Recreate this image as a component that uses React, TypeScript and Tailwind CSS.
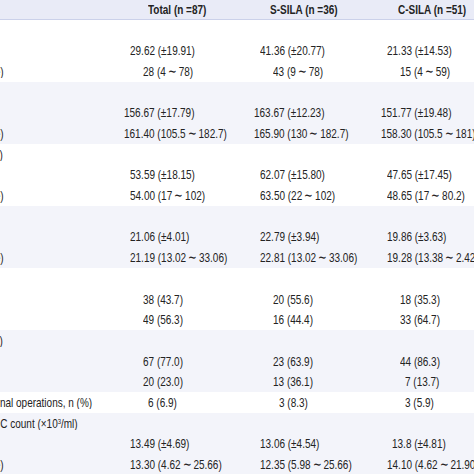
import React from 'react';

type Cell = { text: string; pad: string };

type Row = {
  label?: React.ReactNode;
  labelPad?: string;
  cells?: [Cell, Cell, Cell];
  shaded: boolean;
};

// range separator, tight like the source typesetting
const T = '\u2009∼\u2009';

// left offsets inside each value column
const d = (text: string): Cell => ({ text, pad: 'pl-[10px]' });
const w = (text: string): Cell => ({ text, pad: 'pl-[4px]' });
const n = (text: string): Cell => ({ text, pad: 'pl-[23px]' });
const s = (text: string): Cell => ({ text, pad: 'pl-[28px]' });

const group = (
  label: string,
  labelPad: string,
  shaded: boolean,
  a: [Cell, Cell, Cell],
  b: [Cell, Cell, Cell]
): Row[] => [
  { label, labelPad, shaded },
  { label: 'Mean (±SD)', labelPad: 'pr-[150px]', shaded, cells: a },
  { label: 'Median (range)', labelPad: 'pr-[116px]', shaded, cells: b },
];

const rows: Row[] = [
  ...group('Age, years', 'pr-[150px]', false,
    [d('29.62 (±19.91)'), d('41.36 (±20.77)'), d('21.33 (±14.53)')],
    [n(`28 (4${T}78)`), n(`43 (9${T}78)`), n(`15 (4${T}59)`)]),
  ...group('Height, cm', 'pr-[150px]', true,
    [w('156.67 (±17.79)'), w('163.67 (±12.23)'), w('151.77 (±19.48)')],
    [w(`161.40 (105.5${T}182.7)`), w(`165.90 (130${T}182.7)`), w(`158.30 (105.5${T}181)`)]),
  ...group('Weight, kg (range)', 'pr-[117px]', false,
    [d('53.59 (±18.15)'), d('62.07 (±15.80)'), d('47.65 (±17.45)')],
    [d(`54.00 (17${T}102)`), d(`63.50 (22${T}102)`), d(`48.65 (17${T}80.2)`)]),
  ...group('BMI, kg/m²', 'pr-[150px]', true,
    [d('21.06 (±4.01)'), d('22.79 (±3.94)'), d('19.86 (±3.63)')],
    [d(`21.19 (13.02${T}33.06)`), d(`22.81 (13.02${T}33.06)`), d(`19.28 (13.38${T}2.42)`)]),
  { label: 'Sex, n (%)', labelPad: 'pr-[150px]', shaded: false },
  { label: 'Male', labelPad: 'pr-[150px]', shaded: false, cells: [n('38 (43.7)'), n('20 (55.6)'), n('18 (35.3)')] },
  { label: 'Female', labelPad: 'pr-[150px]', shaded: false, cells: [n('49 (56.3)'), n('16 (44.4)'), n('33 (64.7)')] },
  { label: 'ASA score, n (%)', labelPad: 'pr-[117px]', shaded: true },
  { label: 'I', labelPad: 'pr-[150px]', shaded: true, cells: [n('67 (77.0)'), n('23 (63.9)'), n('44 (86.3)')] },
  { label: 'II', labelPad: 'pr-[150px]', shaded: true, cells: [n('20 (23.0)'), n('13 (36.1)'), s('7 (13.7)')] },
  {
    label: 'Previous abdominal operations, n (%)',
    labelPad: 'pr-[28px]',
    shaded: false,
    cells: [s('6 (6.9)'), { text: '3 (8.3)', pad: 'pl-[29px]' }, s('3 (5.9)')],
  },
  {
    label: (
      <>
        Preoperative WBC count (×10<sup className="text-[8px]">3</sup>/ml)
      </>
    ),
    labelPad: 'pr-[42px]',
    shaded: true,
  },
  { label: 'Mean (±SD)', labelPad: 'pr-[150px]', shaded: true, cells: [d('13.49 (±4.69)'), d('13.06 (±4.54)'), { text: '13.8 (±4.81)', pad: 'pl-[15px]' }] },
  { label: 'Median (range)', labelPad: 'pr-[116px]', shaded: true, cells: [d(`13.30 (4.62${T}25.66)`), d(`12.35 (5.98${T}25.66)`), d(`14.10 (4.62${T}21.90)`)] },
];

// the source table is set in a condensed face; squeeze Arial-metric text to match
function Narrow({ children, right }: { children: React.ReactNode; right?: boolean }) {
  return (
    <span className={`inline-block scale-x-[0.74] ${right ? 'origin-right' : 'origin-left'}`}>
      {children}
    </span>
  );
}

const cols = 'grid grid-cols-[320px_130px_127px_140px]';

export default function App() {
  return (
    <div
      className="w-[474px] h-[474px] overflow-hidden bg-white text-[13.5px] text-[#232323] leading-none"
      style={{ fontFamily: '"Liberation Sans", Arial, sans-serif' }}
    >
      {/* the crop starts 200px into the label column */}
      <div className="-ml-[200px] w-[717px]">
        <div className={`${cols} h-[20px] items-center bg-[#e9ebf7] border-b border-[#cbd1ea] font-bold whitespace-nowrap`}>
          <div />
          <div className="pl-[28px]">
            <Narrow>Total (n =87)</Narrow>
          </div>
          <div className="pl-[20px]">
            <Narrow>S-SILA (n =36)</Narrow>
          </div>
          <div className="pl-[21px]">
            <Narrow>C-SILA (n =51)</Narrow>
          </div>
        </div>
        {rows.map((row, i) => (
          <div
            key={i}
            className={`${cols} h-[20.7px] items-center whitespace-nowrap ${
              row.shaded ? 'bg-[#f3f4fa]' : 'bg-white'
            }`}
          >
            <div className={`flex justify-end overflow-hidden ${row.labelPad ?? ''}`}>
              <Narrow right>{row.label}</Narrow>
            </div>
            {row.cells ? (
              row.cells.map((c, j) => (
                <div key={j} className={c.pad}>
                  <Narrow>{c.text}</Narrow>
                </div>
              ))
            ) : (
              <>
                <div />
                <div />
                <div />
              </>
            )}
          </div>
        ))}
      </div>
    </div>
  );
}
